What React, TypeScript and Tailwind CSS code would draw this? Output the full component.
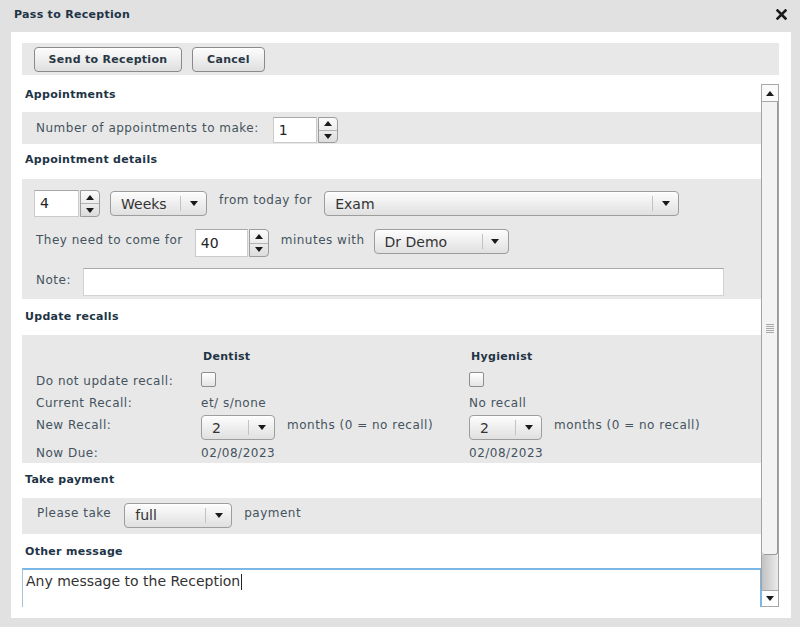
import React from 'react';

// shared text styles for the dialog
const labelCls = "text-[12px] leading-[14px] tracking-[0.5px] text-[#45535e] whitespace-nowrap";
const headCls = "text-[11px] leading-[13px] font-bold tracking-[0.3px] text-[#1e3446] whitespace-nowrap";

const Arrow = ({ up }: { up?: boolean }) => (
  <svg width="8" height="5" viewBox="0 0 8 5" className="block">
    <polygon points={up ? "0,5 8,5 4,0" : "0,0 8,0 4,5"} fill="#1a1a1a" />
  </svg>
);

const Select = ({ value, className }: { value: string; className: string }) => (
  <div className={`flex shrink-0 items-center rounded-[4px] border border-[#9d9d9d] bg-linear-to-b from-[#fdfdfd] to-[#e0e0e0] shadow-[inset_0_1px_0_#fff] ${className}`}>
    <span className="flex-1 pl-[10px] text-[14px] leading-[16px] text-[#333]">{value}</span>
    <span className="h-[15px] w-px bg-[#c2c2c2]" />
    <span className="flex w-[25px] justify-center"><Arrow /></span>
  </div>
);

const NumberField = ({ value, inputW, h }: { value: string; inputW: string; h: string }) => (
  <div className="flex shrink-0">
    <div className={`flex items-center border border-[#cacaca] border-t-[#a8a8a8] bg-white pl-[5px] text-[14px] text-[#222] ${inputW} ${h}`}>{value}</div>
    <div className={`ml-px flex w-[20px] flex-col rounded-r-[4px] border border-[#9d9d9d] bg-linear-to-b from-[#fbfbfb] to-[#dddddd] ${h}`}>
      <div className="flex flex-1 items-center justify-center border-b border-[#b3b3b3]"><Arrow up /></div>
      <div className="flex flex-1 items-center justify-center"><Arrow /></div>
    </div>
  </div>
);

const Checkbox = () => (
  <div className="h-[15px] w-[15px] rounded-[2px] border border-[#8d8d8d] bg-linear-to-b from-white to-[#e4e4e4]" />
);

const Button = ({ children, className }: { children: React.ReactNode; className: string }) => (
  <button className={`flex h-[25px] items-center justify-center rounded-[4px] border border-[#8a8a8a] bg-linear-to-b from-[#fdfdfd] to-[#dfdfdf] shadow-[inset_0_1px_0_#fff] ${headCls} text-[#283845] ${className}`}>
    {children}
  </button>
);

const Header = ({ title, className }: { title: string; className: string }) => (
  <div className={`pl-[3px] ${className}`}>
    <div className={headCls}>{title}</div>
  </div>
);

const ScrollBar = () => (
  <div className="flex h-full w-[18px] shrink-0 flex-col">
    <div className="flex h-[18px] items-center justify-center border border-[#a8a8a8] bg-[#fafafa]"><Arrow up /></div>
    <div className="flex flex-1 flex-col border-x border-[#a3a3a3] bg-[#f5f5f5]">
      <div className="flex flex-1 items-center justify-center rounded-b-[3px] border-b border-r border-[#9a9a9a] bg-[#f3f3f3]">
        <div className="flex w-[8px] flex-col gap-[1px]">
          {[0, 1, 2, 3, 4].map(i => <div key={i} className="h-px bg-[#a9a9a9]" />)}
        </div>
      </div>
      <div className="h-[35px] bg-linear-to-r from-[#c2c2c2] to-[#ebebeb]" />
    </div>
    <div className="flex h-[17px] items-center justify-center border border-[#a8a8a8] border-l-[#7ab6e6] bg-white"><Arrow /></div>
  </div>
);

export default function App() {
  return (
    <div className="flex h-[627px] w-[800px] flex-col overflow-hidden bg-[#e1e1e1] font-['DejaVu_Sans',sans-serif]">
      {/* Title bar */}
      <div className="flex h-8 shrink-0 items-center justify-between pb-[3px] pl-[14px] pr-[13px]">
        <span className={headCls}>Pass to Reception</span>
        <svg width="11" height="11" viewBox="0 0 11 11">
          <path d="M1.5 1.5 L9.5 9.5 M9.5 1.5 L1.5 9.5" stroke="#1a1a1a" strokeWidth="2.6" strokeLinecap="square" />
        </svg>
      </div>

      {/* Dialog body */}
      <div className="ml-[11px] mr-[9px] flex h-[586px] shrink-0 flex-col bg-white pl-[11px] pr-[12px] pt-[11px]">
        <div className="flex h-8 shrink-0 items-center gap-[10px] bg-[#e8e8e8] pl-3">
          <Button className="w-[148px]">Send to Reception</Button>
          <Button className="w-[73px]">Cancel</Button>
        </div>

        <div className="mt-[9px] flex h-[523px] shrink-0">
          <div className="flex-1 overflow-hidden">
            <Header title="Appointments" className="h-[28px] pt-[4px]" />
            <div className="flex h-[32px] items-center bg-[#e8e8e8] pl-[14px]">
              <span className={labelCls}>Number of appointments to make:</span>
              <div className="ml-[14px] mt-[4px]">
                <NumberField value="1" inputW="w-[44px]" h="h-[26px]" />
              </div>
            </div>

            <Header title="Appointment details" className="h-[35px] pt-[9px]" />
            <div className="flex h-[120px] flex-col bg-[#e8e8e8] pl-[12px] pt-[11px]">
              <div className="flex h-[27px] items-center">
                <NumberField value="4" inputW="w-[45px]" h="h-[27px]" />
                <Select value="Weeks" className="ml-[10px] h-[25px] w-[97px]" />
                <span className={`${labelCls} mb-[7px] ml-[12px]`}>from today for</span>
                <Select value="Exam" className="ml-[12px] h-[25px] w-[355px]" />
              </div>
              <div className="mt-[12px] flex h-[28px] items-center">
                <span className={`${labelCls} mb-[6px] pl-[2px]`}>They need to come for</span>
                <div className="ml-[12px]">
                  <NumberField value="40" inputW="w-[53px]" h="h-[28px]" />
                </div>
                <span className={`${labelCls} mb-[6px] ml-[12px]`}>minutes with</span>
                <Select value="Dr Demo" className="mb-[3px] ml-[9px] h-[25px] w-[135px]" />
              </div>
              <div className="mt-[11px] flex h-[28px] items-center">
                <span className={`${labelCls} mb-[4px] w-[49px] pl-[2px]`}>Note:</span>
                <div className="h-[28px] w-[641px] border border-[#d2d2d2] border-t-[#a9a9a9] bg-white" />
              </div>
            </div>

            <Header title="Update recalls" className="h-[36px] pt-[11px]" />
            <div className="grid h-[128px] grid-cols-[165px_268px_1fr] grid-rows-[18px_28px_20px_29px_21px] items-center bg-[#e8e8e8] pl-[14px] pt-[12px]">
              <span />
              <span className={`${headCls} pl-[2px]`}>Dentist</span>
              <span className={`${headCls} pl-[2px]`}>Hygienist</span>

              <span className={`${labelCls} mt-[4px]`}>Do not update recall:</span>
              <Checkbox />
              <Checkbox />

              <span className={labelCls}>Current Recall:</span>
              <span className={labelCls}>et/ s/none</span>
              <span className={labelCls}>No recall</span>

              <span className={`${labelCls} mb-[5px]`}>New Recall:</span>
              <div className="flex items-center">
                <Select value="2" className="h-[25px] w-[74px]" />
                <span className={`${labelCls} mb-[5px] ml-[12px]`}>months (0 = no recall)</span>
              </div>
              <div className="flex items-center">
                <Select value="2" className="h-[25px] w-[73px]" />
                <span className={`${labelCls} mb-[5px] ml-[12px]`}>months (0 = no recall)</span>
              </div>

              <span className={labelCls}>Now Due:</span>
              <span className={labelCls}>02/08/2023</span>
              <span className={labelCls}>02/08/2023</span>
            </div>

            <Header title="Take payment" className="h-[35px] pt-[10px]" />
            <div className="flex h-[36px] items-center bg-[#e8e8e8] pl-[15px]">
              <span className={`${labelCls} mb-[6px]`}>Please take</span>
              <Select value="full" className="mb-[2px] ml-[13px] h-[25px] w-[108px]" />
              <span className={`${labelCls} mb-[6px] ml-[12px]`}>payment</span>
            </div>

            <Header title="Other message" className="h-[34px] pt-[11px]" />
            <div className="flex h-[60px] items-start border border-t-2 border-[#7ab6e6] border-l-[#a2c6e2] pl-[3px] pt-[3px]">
              <span className="text-[14px] leading-[17px] text-[#333]">Any message to the Reception</span>
              <span className="ml-px mt-px h-[16px] w-px bg-[#222]" />
            </div>
          </div>
          <ScrollBar />
        </div>
      </div>
    </div>
  );
}
